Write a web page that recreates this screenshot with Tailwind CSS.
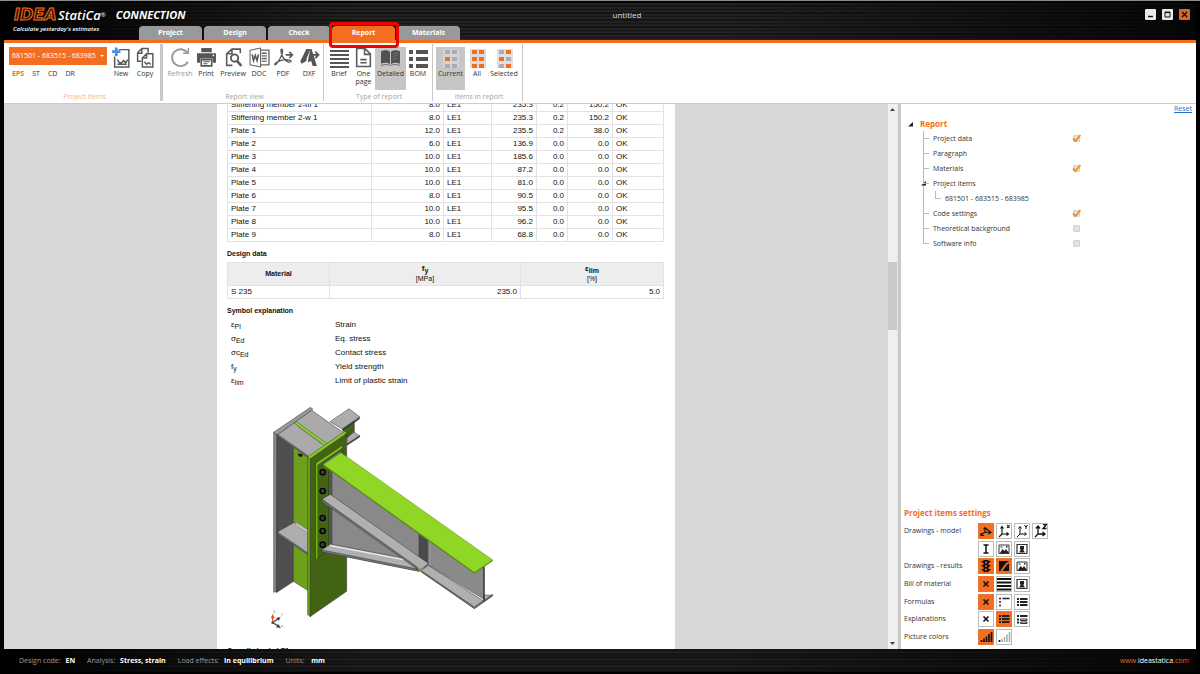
<!DOCTYPE html>
<html lang="en">
<head>
  <meta charset="UTF-8" />
  <meta name="viewport" content="width=device-width, initial-scale=1.0" />
  <title>IDEA StatiCa Connection - untitled</title>
  <script src="https://cdn.jsdelivr.net/npm/@tailwindcss/browser@4"></script>
</head>
<body class="h-screen flex flex-col overflow-hidden bg-black px-1 border-t border-[#8b8b8b] font-['Open_Sans','Noto_Sans',sans-serif] text-[7px] leading-[10px] text-[#333]">

  <!-- Title bar -->
  <header class="relative shrink-0 mt-0.5 border-b-3 border-[#f36e21] bg-[linear-gradient(90deg,#000_0%,transparent_30%,transparent_60%,#000c_100%),repeating-linear-gradient(180deg,#101010_0px,#303030_1px,#1b1b1b_2px,#0d0d0d_3px,#2a2a2a_5px,#141414_6px,#1a1a1a_7px)]">
    <div class="flex items-center h-[23px] pl-[10px] pr-[6px]">
      <h1 class="flex items-center text-white italic">
        <span class="w-[44px] font-['DejaVu_Sans',sans-serif] text-[16px] font-bold text-[#3a1400] [-webkit-text-stroke:1px_#f36e21]">IDEA</span>
        <span class="text-[13px] font-semibold">StatiCa</span><span class="text-[6px] self-start not-italic">®</span>
        <span class="ml-[10px] text-[11px] font-bold">CONNECTION</span>
      </h1>
      <p class="absolute left-0 right-0 text-center pl-[54px] text-[8px] text-[#ddd]">untitled</p>
      <div class="relative ml-auto flex gap-[6px]">
        <button aria-label="Minimize" class="size-[11px] rounded-[1px] bg-[#e8e8e8]"><svg viewBox="0 0 11 11"><path d="M3 7.5h5" stroke="#111" stroke-width="1.4"/></svg></button>
        <button aria-label="Maximize" class="size-[11px] rounded-[1px] bg-[#e8e8e8]"><svg viewBox="0 0 11 11"><path d="M3 3h5v5h-5zM3 3.6h5" fill="none" stroke="#111"/></svg></button>
        <button aria-label="Close" class="size-[11px] rounded-[1px] bg-[#e0661f]"><svg viewBox="0 0 11 11"><path d="M3 3l5 5M8 3l-5 5" stroke="#111" stroke-width="1.5"/></svg></button>
      </div>
    </div>
    <div class="flex h-[14px]">
      <p class="w-[135px] pl-[9px] -mt-0.5 text-[6px] italic font-semibold text-white whitespace-nowrap">Calculate yesterday's estimates</p>
      <nav class="flex gap-0.5 font-bold text-white text-center leading-[14px]">
        <a href="#" class="w-[63px] rounded-t bg-[#999]">Project</a>
        <a href="#" class="w-[62px] rounded-t bg-[#999]">Design</a>
        <a href="#" class="w-[62px] rounded-t bg-[#999]">Check</a>
        <a href="#" class="relative w-[63px] rounded-t bg-[#f36e21]">Report
          <span class="absolute z-10 -left-[3px] -right-[4px] -top-[4px] -bottom-[8px] rounded border-[3px] border-[#f40000]"></span>
        </a>
        <a href="#" class="w-[63px] rounded-t bg-[#999]">Materials</a>
      </nav>
    </div>
  </header>

  <!-- Ribbon -->
  <section class="shrink-0 flex h-[61px] bg-white border-b border-[#ccc] pt-px pb-0.5 leading-[8px]">
    <div class="w-[156px] flex flex-col pl-[5px] pt-[3px]">
      <div class="flex">
        <div class="w-[98px]">
          <div class="relative">
            <select aria-label="Project item" class="appearance-none block w-full h-[18px] pl-[3px] bg-[#f36e21] text-white"><option>681501 - 683515 - 683985</option></select>
            <svg class="absolute right-[3px] top-[8px] w-[4px] h-[3px]" viewBox="0 0 4 3"><path d="M0 0h4L2 2z" fill="#fff"/></svg>
          </div>
          <div class="flex gap-[8px] pl-[3px] pt-[5px]">
            <button class="font-bold text-[#f36e21]">EPS</button>
            <button>ST</button>
            <button>CD</button>
            <button>DR</button>
          </div>
        </div>
        <button class="w-[28px] flex flex-col items-center gap-0.5">
          <svg class="size-[21px]" viewBox="0 0 20 20" fill="none" stroke="#5a5a5a" stroke-width="1.4"><path d="M7.500 2.500h9.500v16.500h-13.500v-10"/><path d="M6 12l2 3h2l2-2 2 2 2-3M6 16.500h9"/><path d="M5 .5v8M1 4.500h8" stroke="#4a90e2" stroke-width="2.600"/></svg>
          New
        </button>
        <button class="w-[20px] flex flex-col items-center gap-0.5">
          <svg class="size-[21px]" viewBox="0 0 20 20" fill="none" stroke="#5a5a5a" stroke-width="1.4"><path d="M6 13.500h-3.500v-8l4-4h6v4M6.500 2v4h-4"/><path d="M11 6.500h6v12.500h-10v-8.500zM11 6.500v4h-4M9 14l2 2.500 2-1.500 2 1.500"/></svg>
          Copy
        </button>
      </div>
      <p class="mt-auto text-center text-[#f8b48f]">Project items</p>
    </div>
    <div class="w-[3px] bg-[#c8c8c8]"></div>

    <div class="flex flex-col w-[161px] pt-[3px] pl-[3px] border-r border-[#c8c8c8]">
      <div class="flex">
        <button class="w-[28px] flex flex-col items-center gap-0.5 text-[#999]">
          <svg class="size-[21px]" viewBox="0 0 20 20" fill="none" stroke="#999" stroke-width="1.8"><path d="M17 14a8 8 0 1 1-.5-8.500"/><path d="M12.500 6h5v-5" stroke-width="1.4"/></svg>
          Refresh
        </button>
        <button class="w-[24px] flex flex-col items-center gap-0.5">
          <svg class="size-[21px]" viewBox="0 0 20 20" fill="#555"><path d="M5 1h10v4h-10z"/><path d="M1 6h18v9h-3v-4h-12v4h-3z"/><path d="M5 12h10v6h-10z" fill="#fff" stroke="#555" stroke-width="1.5"/><path d="M7 14h6M7 16h4" stroke="#555"/><circle cx="16.500" cy="8" r=".8" fill="#fff"/></svg>
          Print
        </button>
        <button class="w-[30px] flex flex-col items-center gap-0.5">
          <svg class="size-[21px]" viewBox="0 0 20 20" fill="none" stroke="#5a5a5a" stroke-width="1.5"><path d="M9 17.500h-5.500v-11l5-4.500h8v4M8.500 2.500v4h-5"/><circle cx="11" cy="10.500" r="3.500" stroke-width="1.8"/><path d="M13.500 13.500l4 4.500" stroke-width="2.400"/></svg>
          Preview
        </button>
        <button class="w-[22px] flex flex-col items-center gap-0.5">
          <svg class="size-[21px]" viewBox="0 0 20 20" fill="none" stroke="#666"><path d="M1 3l10-2v18l-10-2z" fill="#fff"/><path d="M3 7l1.300 6 1.700-5 1.700 5 1.300-6" stroke="#555" stroke-width="1.500"/><path d="M11 3h8v14h-8" stroke-width="1.300"/><path d="M12 6h5M12 8.500h5M12 11h5M12 13.500h5" stroke-width="1.300"/></svg>
          DOC
        </button>
        <button class="w-[26px] flex flex-col items-center gap-0.5">
          <svg class="size-[21px]" viewBox="0 0 20 20" fill="none" stroke="#5a5a5a" stroke-width="1.300"><path d="M8 2c2 0 1 5-1 8.500s-4 6.500-5 6.500c-2-1.500 6-5 10-5 3 0 6 .5 5 2-2 1-5-1-7-3.500s-3-8.500-2-8.500z"/><path d="M12 7.500h6M15.500 4.500l3 3-3 3" stroke-width="1.600"/></svg>
          PDF
        </button>
        <button class="w-[26px] flex flex-col items-center gap-0.5">
          <svg class="size-[21px]" viewBox="0 0 20 20" fill="#555"><path d="M1 14l6-12h4l-5 12zM9 10l2-8h1l5 16h-4l-1.500-5-3 2z"/><path d="M2 15l5-3" stroke="#555" stroke-width="2"/><path d="M13 7.500h5M15.500 4.500l3 3-3 3" fill="none" stroke="#555" stroke-width="1.700"/></svg>
          DXF
        </button>
      </div>
      <p class="mt-auto text-center text-[#a5a5a5]">Report view</p>
    </div>

    <div class="flex flex-col w-[109px] pt-[3px] pl-0.5 border-r border-[#c8c8c8]">
      <div class="flex">
        <button class="w-[26px] h-[43px] flex flex-col items-center gap-0.5">
          <svg class="size-[21px]" viewBox="0 0 21 21"><path d="M1 4h19M1 8h19M1 12h19M1 16h19M1 20h19" stroke="#555" stroke-width="1.800"/></svg>
          Brief
        </button>
        <button class="w-[23px] h-[43px] flex flex-col items-center gap-0.5">
          <svg class="size-[21px]" viewBox="0 0 20 20" fill="none" stroke="#5a5a5a" stroke-width="1.500"><path d="M3.500 1.500h8l5 5v12h-13zM11 2v5h5M7 12h6M7 15h6"/></svg>
          One page
        </button>
        <button class="w-[31px] h-[43px] flex flex-col items-center gap-0.5 bg-[#c6c6c6]">
          <svg class="size-[21px]" viewBox="0 0 20 20"><path d="M1 4q5-2 8.500.5v12q-3.500-2.500-8.500-.5zM19 4q-5-2-8.500.5v12q3.500-2.500 8.500-.5z" fill="#505050"/><path d="M1 17.500q5-1.500 9 0 4-1.500 9 0" fill="none" stroke="#777"/><path d="M12 6.500l5-1M12 9l5-1M12 11.500l5-1" stroke="#888" stroke-width=".6"/></svg>
          Detailed
        </button>
        <button class="w-[24px] h-[43px] flex flex-col items-center gap-0.5">
          <svg class="size-[21px]" viewBox="0 0 21 21" fill="#555"><path d="M1 3h4v4h-4zM8 3h12v4h-12zM1 10h4v4h-4zM8 10h12v4h-12zM1 17h4v4h-4zM8 17h12v4h-12z"/></svg>
          BOM
        </button>
      </div>
      <p class="mt-auto text-center text-[#a5a5a5]">Type of report</p>
    </div>

    <div class="flex flex-col w-[90px] pt-[3px] pl-[3px] border-r border-[#c8c8c8]">
      <div class="flex">
        <button class="w-[29px] h-[43px] flex flex-col items-center gap-0.5 bg-[#c6c6c6]">
          <svg class="size-[21px]" viewBox="0 0 21 21"><path d="M3 2h16v19h-16z" fill="#d4d4d6"/><path d="M5 3h5v4h-5zM12 3h5v4h-5zM12 10h5v4h-5zM5 17h5v4h-5zM12 17h5v4h-5z" fill="#a9abb8"/><path d="M5 10h5v4h-5z" fill="#f36e21"/></svg>
          Current
        </button>
        <button class="w-[24px] h-[43px] flex flex-col items-center gap-0.5">
          <svg class="size-[21px]" viewBox="0 0 21 21"><path d="M3 2h16v19h-16z" fill="#dcdcdc"/><path d="M5 3h5v4h-5zM12 3h5v4h-5zM5 10h5v4h-5zM12 10h5v4h-5zM5 17h5v4h-5zM12 17h5v4h-5z" fill="#f36e21"/></svg>
          All
        </button>
        <button class="w-[30px] h-[43px] flex flex-col items-center gap-0.5">
          <svg class="size-[21px]" viewBox="0 0 21 21"><path d="M3 2h16v19h-16z" fill="#e0e0e0"/><path d="M5 3h5v4h-5zM12 10h5v4h-5zM5 17h5v4h-5z" fill="#a9abb8"/><path d="M12 3h5v4h-5zM5 10h5v4h-5zM12 17h5v4h-5z" fill="#f36e21"/></svg>
          Selected
        </button>
      </div>
      <p class="mt-auto text-center text-[#a5a5a5]">Items in report</p>
    </div>
  </section>

  <main class="flex-1 min-h-0 flex bg-white">

    <!-- Report preview -->
    <section class="flex-1 min-w-0 overflow-hidden flex justify-center bg-[#d8d8d8]">
      <article class="w-[458px] bg-white pl-[10px] pr-[11px] font-['Liberation_Sans',Arial,sans-serif] leading-[12px] text-[#111]">
        <table class="w-full -mt-[6px] table-fixed border-collapse text-[8px]">
          <colgroup>
            <col class="w-[144px]" /><col class="w-[72px]" /><col class="w-[48px]" /><col class="w-[45px]" /><col class="w-[31px]" /><col class="w-[45px]" /><col />
          </colgroup>
          <tbody id="plates"></tbody>
        </table>

        <h2 class="mt-[6px] font-bold">Design data</h2>
        <table class="w-full mt-[2px] table-fixed border-collapse">
          <thead class="bg-[#ededed] leading-[10px]">
            <tr class="h-[23px]">
              <th class="w-[102px] border border-[#e2e2e2] font-bold">Material</th>
              <th class="w-[191px] border border-[#e2e2e2] font-normal"><b class="text-[8px]">f<sub class="text-[7px]">y</sub></b><br />[MPa]</th>
              <th class="border border-[#e2e2e2] font-normal"><b class="text-[8px]">ε<sub class="text-[7px]">lim</sub></b><br />[%]</th>
            </tr>
          </thead>
          <tbody class="text-[8px]">
            <tr>
              <td class="border border-[#e2e2e2] px-[3px]">S 235</td>
              <td class="border border-[#e2e2e2] px-[3px] text-right">235.0</td>
              <td class="border border-[#e2e2e2] px-[3px] text-right">5.0</td>
            </tr>
          </tbody>
        </table>

        <h2 class="mt-[6px] font-bold">Symbol explanation</h2>
        <dl class="mt-px pl-[4px] grid grid-cols-[104px_1fr] text-[8px] leading-[14px]">
          <dt>ε<sub class="text-[7px]">Pl</sub></dt><dd>Strain</dd>
          <dt>σ<sub class="text-[7px]">Ed</sub></dt><dd>Eq. stress</dd>
          <dt>σc<sub class="text-[7px]">Ed</sub></dt><dd>Contact stress</dd>
          <dt>f<sub class="text-[7px]">y</sub></dt><dd>Yield strength</dd>
          <dt>ε<sub class="text-[7px]">lim</sub></dt><dd>Limit of plastic strain</dd>
        </dl>

        <!-- 3D view of the joint -->
        <svg class="block mt-[15px] ml-[38px] w-[233px] h-[230px]" viewBox="150 24 699 690" stroke="#333" stroke-width="1.500" stroke-linejoin="round">
          <!-- rear beam -->
          <path d="M345 80l57-39 32 24-52 37z" fill="#adadad"/>
          <path d="M382 102l36-24v36l-22 15z" fill="#426314"/>
          <path d="M396 129l20-18 18 11-38 27z" fill="#adadad"/>
          <path d="M382 104l52-37v4l-50 36zM396 147l38-25v4l-38 25z" fill="#444"/>
          <!-- column -->
          <path d="M176 112l10 6v470l-10 4z" fill="#888"/>
          <path d="M186 120l50 35v404l-52 34z" fill="#4f4f51"/>
          <path d="M176 112l110-75 8 6-108 77z" fill="#9a9a9a"/>
          <path d="M235 150l46 30v408l-46-29z" fill="#6da11d"/>
          <path d="M187 120l53-38 92 66-52 38z" fill="#aaa"/>
          <path d="M242 80l48-34 94 66-50 35z" fill="#aaa"/>
          <path d="M187 118v5l93 65v-5z" fill="#777"/>
          <path d="M238 84l6-4 92 66-7 5z" fill="#8fd625" stroke="#3c5c0d"/>
          <path d="M248 95l73 53" stroke="#666" fill="none"/>
          <path d="M249 176l14 2-2 7-9-1z" fill="#111"/>
          <path d="M188 410l50-28 42 28v68l-92-63z" fill="#adadad"/>
          <path d="M242 382l38 24v8l-38-24z" fill="#d0d0d0" stroke="#777"/>
          <path d="M188 412l92 63v5l-92-63z" fill="#777"/>
          <!-- end plates -->
          <path d="M278 187l9 5v473l-9-6z" fill="#6fa61d"/>
          <path d="M286 190l109-75v474l-110 76z" fill="#426314"/>
          <path d="M277 187l113-78 5 5-110 77z" fill="#8ccf24" stroke="#3c5c0d"/>
          <path d="M304 207l79-54v280l-79 59z" fill="#426314"/>
          <path d="M303 205l77-52 3 5-75 52v280l-5 3z" fill="#86c822" stroke="#3c5c0d"/>
          <path d="M322 206l54-37 5 5-55 39z" fill="#777"/>
          <!-- web and haunch -->
          <path d="M342 222l271 196v104l-46-28-225-44z" fill="#898989"/>
          <path d="M342 222l9 6v226l-9-4z" fill="#5a5a5a"/>
          <path d="M613 417l194 98v98l-163-100-31 11z" fill="#8a8a8a"/>
          <path d="M613 417l27 17v72l-27 16z" fill="#4a4a4a"/>
          <path d="M640 434v72M645 437v72" stroke="#aaa"/>
          <path d="M321 465l25-18 222 43 52 37-10 1-289-58z" fill="#b0b0b0"/>
          <path d="M346 452l220 42" stroke="#eee" stroke-width="4"/>
          <path d="M321 465l291 58v6l-291-58z" fill="#777"/>
          <path d="M321 313l25-15 294 207-20 18-12-1z" fill="#b0b0b0"/>
          <path d="M321 313l287 204v6l-287-203z" fill="#777"/>
          <path d="M807 600l26 1-55 39-162-112 24-17 167 108z" fill="#b0b0b0"/>
          <path d="M616 525l162 111 55-38v5l-55 38-162-112z" fill="#777"/>
          <path d="M807 516v103" stroke="#333" stroke-width="4"/>
          <path d="M610 521l12 4-2 7-10-4z" fill="#6fa61d" stroke="none"/>
          <!-- top flange -->
          <path d="M325 209l53-36 455 322-55 38z" fill="#8fd625" stroke="#5d8c15"/>
          <path d="M325 209l453 323 55-38v4l-55 38-453-323z" fill="#5d8c15" stroke="none"/>
          <g fill="#3a3a3a" stroke="#000" stroke-width="4"><circle cx="323" cy="232" r="8"/><circle cx="323" cy="288" r="8"/><circle cx="323" cy="369" r="8"/><circle cx="323" cy="408" r="8"/><circle cx="323" cy="449" r="8"/></g>
          <!-- axes -->
          <g fill="none" stroke="#555" stroke-width="4"><path d="M173 683l20-14M173 683l20 12"/><path d="M184 669l12-2-5 10zM184 697l13 2-7-11z" fill="#444" stroke-width="1"/><path d="M173 683v-20" stroke="#f4511e"/><path d="M167 670l6-13 6 13z" fill="#f4511e" stroke="none"/><path d="M175 648h5l-5 6h5M198 655l4 4 4-4M202 659l-3 5M198 690l7 7M205 690l-7 7" stroke="#888" stroke-width="1.500"/></g>
          <circle cx="173" cy="683" r="4" fill="#555" stroke="none"/>
        </svg>

        <h2 class="mt-[12px] font-bold">Overall check, LE1</h2>
      </article>
    </section>

    <!-- Scroll bar -->
    <div class="w-[9px] bg-[#f0f0f0] flex flex-col items-center py-[3px]">
      <svg class="w-[5px] h-[5px]" viewBox="0 0 5 5"><path d="M0 4l2.500-3 2.500 3z" fill="#444"/></svg>
      <div class="mt-[150px] w-full h-[68px] bg-[#c9c9c9]"></div>
      <svg class="mt-auto w-[5px] h-[5px]" viewBox="0 0 5 5"><path d="M0 1l2.500 3 2.500-3z" fill="#444"/></svg>
    </div>
    <div class="w-[4px] bg-[#c9c9c9] border-l border-[#e6e6e6]"></div>

    <!-- Settings panel -->
    <aside class="w-[295px] flex flex-col pl-[3px] pr-[4px] pb-[4px]">
      <a href="#" class="self-end text-[#2374d0] underline">Reset</a>
      <div class="mt-[5px] pl-[4px] flex items-center gap-[7px] text-[8px] font-bold text-[#f36e21]">
        <svg class="size-[5px]" viewBox="0 0 5 5"><path d="M5 0v4.500h-5z" fill="#222"/></svg>
        Report
      </div>
      <ul id="report-tree" class="ml-[19px] pt-[2px] leading-[15px]"></ul>

      <h2 class="mt-auto text-[8px] font-bold text-[#f36e21]">Project items settings</h2>
      <div id="settings" class="mt-[5px] h-[122px] flex flex-col justify-between"></div>
    </aside>
  </main>

  <!-- Status bar -->
  <footer class="shrink-0 flex items-center gap-[12px] h-[23px] mb-0.5 pl-[15px] pr-[7px] text-[#9a9a9a] bg-[linear-gradient(90deg,#000_0%,transparent_30%,transparent_60%,#000c_100%),repeating-linear-gradient(180deg,#1c1c1c_0px,#0f0f0f_2px,#282828_3px,#101010_5px,#1b1b1b_7px)]">
    <p>Design code: <b class="ml-[3px] text-white">EN</b></p>
    <p>Analysis: <b class="ml-[3px] text-white">Stress, strain</b></p>
    <p>Load effects: <b class="ml-[3px] text-white">In equilibrium</b></p>
    <p>Units: <b class="ml-[5px] text-white">mm</b></p>
    <a href="#" class="ml-auto text-[#e0661f]">www.<span class="text-white">ideastatica</span>.com</a>
  </footer>

  <script>
    const plates = [
      ["Stiffening member 2-tfl 1", "8.0", "LE1", "235.3", "0.2", "150.2", "OK"],
      ["Stiffening member 2-w 1", "8.0", "LE1", "235.3", "0.2", "150.2", "OK"],
      ["Plate 1", "12.0", "LE1", "235.5", "0.2", "38.0", "OK"],
      ["Plate 2", "6.0", "LE1", "136.9", "0.0", "0.0", "OK"],
      ["Plate 3", "10.0", "LE1", "185.6", "0.0", "0.0", "OK"],
      ["Plate 4", "10.0", "LE1", "87.2", "0.0", "0.0", "OK"],
      ["Plate 5", "10.0", "LE1", "81.0", "0.0", "0.0", "OK"],
      ["Plate 6", "8.0", "LE1", "90.5", "0.0", "0.0", "OK"],
      ["Plate 7", "10.0", "LE1", "95.5", "0.0", "0.0", "OK"],
      ["Plate 8", "10.0", "LE1", "96.2", "0.0", "0.0", "OK"],
      ["Plate 9", "8.0", "LE1", "68.8", "0.0", "0.0", "OK"]
    ];
    document.getElementById("plates").innerHTML = plates.map(row => `<tr>${row.map(cell =>
      `<td class="border border-[#e2e2e2] px-[3px] ${/^\d/.test(cell) ? "text-right" : "text-left"}">${cell}</td>`
    ).join("")}</tr>`).join("");

    // checked: true / false, or null where the item has no tick box
    const tree = [
      { label: "Project data", checked: true },
      { label: "Paragraph", checked: null },
      { label: "Materials", checked: true },
      { label: "Project items", checked: null, child: "681501 - 683515 - 683985" },
      { label: "Code settings", checked: true },
      { label: "Theoretical background", checked: false },
      { label: "Software info", checked: false }
    ];
    document.getElementById("report-tree").innerHTML = tree.map(item => `
      <li class="relative pl-[10px] before:absolute before:left-0 before:top-0 before:h-full before:border-l before:border-[#bbb] last:before:h-[8px] after:absolute after:left-0 after:top-[7px] after:w-[6px] after:border-t after:border-[#bbb]">
        ${item.child ? `<svg class="absolute -left-[2px] top-[5px] size-[5px]" viewBox="0 0 5 5"><path d="M5 0v4.500h-5z" fill="#222"/></svg>` : ""}
        <label class="flex items-center w-[147px] h-[15px]">
          <span class="flex-1">${item.label}</span>
          ${item.checked === null ? "" : `<input type="checkbox" ${item.checked ? "checked" : ""} class="peer appearance-none size-[7px] rounded-[1px] bg-[#e0e0e0] border border-[#d4d4d4]" />
          <svg class="hidden peer-checked:block size-[9px] -ml-[8px] -mr-px" viewBox="0 0 9 9"><path d="M1 4.500l2.500 2.500L8.500 1" fill="none" stroke="#f58a1f" stroke-width="1.800"/></svg>`}
        </label>
        ${item.child ? `<div class="h-[15px] flex"><span class="ml-[2px] mr-[4px] w-[6px] h-[8px] border-l border-b border-[#bbb]"></span>${item.child}</div>` : ""}
      </li>`).join("");

    const icons = {
      axo: `<path d="M7 9V5M7 9l5 .5M7 9l-4 3M5.500 6.500L7 4.500l2 2M10.500 7.500l2.500 2-2.500 1.500M3 10v2.500h3M8 5.500l4 3" fill="none" stroke="#111" stroke-width="1.100"/>`,
      axisX: `<path d="M6 4v7h6M6 11l-3 3M4.500 5.500L6 3.500l1.500 2M10.500 9.500L12.500 11l-2 1.500M11 2l2.500 3M13.500 2l-2.500 3" fill="none" stroke="#111" stroke-width="1.100"/>`,
      axisY: `<path d="M6 4v7h6M6 11l-3 3M4.500 5.500L6 3.500l1.500 2M10.500 9.500L12.500 11l-2 1.500M10.500 2l1.500 2 1.500-2M12 4v2" fill="none" stroke="#111"/>`,
      axisZ: `<path d="M6 4v7h6M6 11l-3 3M4 5.500L6 3l2 2.500M10.500 9L13 11l-2.500 2M11 1.500h3.500l-3.500 4h3.500" fill="none" stroke="#111" stroke-width="1.300"/>`,
      beam: `<path d="M5.500 4h5M8 4v8M5.500 12h5" stroke="#111" stroke-width="1.500"/>`,
      image: `<path d="M3 4h10v8.500h-10z" fill="none" stroke="#333"/><path d="M4 12l2.500-4 2 2 1.500-2 3 4zM10 5h1.500v1.500h-1.500zM4.500 5.500h2v1h-2z" fill="#222"/>`,
      photo: `<path d="M3 3.500h10v9h-10z" fill="none" stroke="#333" stroke-width="1.200"/><path d="M6 5h4v3.500h-1l2 3h-6l2-3h-1z" fill="#222"/>`,
      lights: `<path d="M5.500 2h5v12h-5zM3 3h10l-2 2h-6zM3 7h10l-2 2h-6zM3 11h10l-2 2h-6z" fill="#111"/><circle cx="8" cy="4.500" r="1" fill="#f36e21"/><circle cx="8" cy="8" r="1" fill="#f36e21"/><circle cx="8" cy="11.500" r="1" fill="#f36e21"/>`,
      diagonal: `<path d="M3 3h10v10h-10z" fill="#111"/><path d="M5 13c3-2 3-6 8-9" fill="none" stroke="#f36e21" stroke-width="1.800"/>`,
      cross: `<path d="M5.500 5.500l5 5M10.500 5.500l-5 5" stroke="#111" stroke-width="1.600"/>`,
      lines: `<path d="M1 3h14M1 6.500h14M1 10h14M1 13.500h14" stroke="#111" stroke-width="2.200"/>`,
      short: `<path d="M3 4.500h2M6.500 4.500h7M3 8h2M3 11.500h2" stroke="#222" stroke-width="1.700"/>`,
      list: `<path d="M3 5h2M6 5h7.500M3 8h2M6 8h7.500M3 11h2M6 11h7.500" stroke="#222" stroke-width="2"/>`,
      listDetail: `<path d="M3 5h2M6 5h7.500M3 8.500h2M3 11.500h2" stroke="#222" stroke-width="2"/><path d="M6.500 8h6.500v1.500h-6.500zM6.500 11h6.500v1.500h-6.500z" fill="none" stroke="#333"/>`,
      bars: `<path d="M3.500 13v-2M6 13V9.500M8.500 13V7.500M11 13V5M13.500 13V3" stroke="#111" stroke-width="1.700"/>`,
      barsGrey: `<path d="M3.500 13v-2" stroke="#111" stroke-width="1.700"/><path d="M6 13V10M8.500 13V8M11 13V5.500M13.500 13V3" stroke="#aaa" stroke-width="1.500"/>`
    };
    // a leading * marks the selected button
    const settings = [
      ["Drawings - model", "*axo", "axisX", "axisY", "axisZ"],
      ["", "beam", "image", "photo"],
      ["Drawings - results", "*lights", "*diagonal", "image"],
      ["Bill of material", "*cross", "lines", "photo"],
      ["Formulas", "*cross", "short", "list"],
      ["Explanations", "cross", "*list", "listDetail"],
      ["Picture colors", "*bars", "barsGrey"]
    ];
    document.getElementById("settings").innerHTML = settings.map(([label, ...names]) => `
      <div class="flex gap-0.5 items-center">
        <span class="w-[72px]">${label}</span>
        ${names.map(name => {
          const key = name.replace("*", "");
          return `<button aria-label="${label} ${key}" class="size-[16px] border ${name[0] === "*" ? "bg-[#f36e21] border-[#e8762f]" : "bg-white border-[#bbb]"}"><svg viewBox="1 1 14 14">${icons[key]}</svg></button>`;
        }).join("")}
      </div>`).join("");
  </script>
</body>
</html>
